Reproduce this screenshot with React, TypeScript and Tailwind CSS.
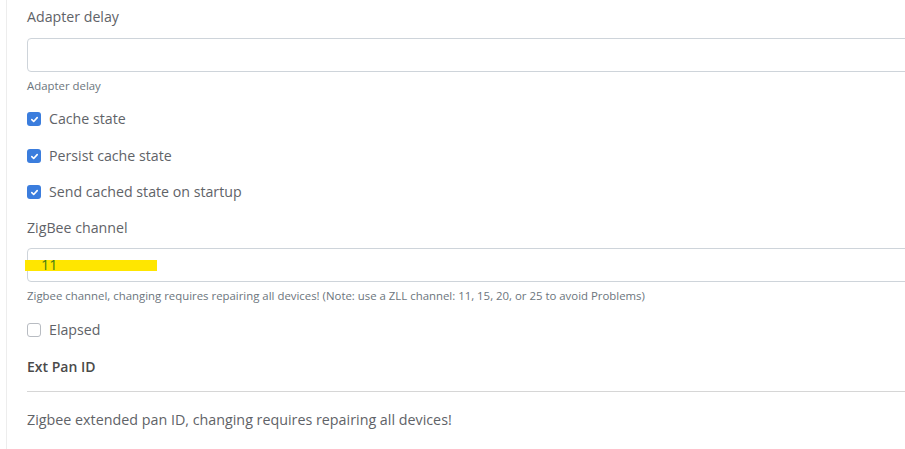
import React from "react";

function Check({ checked, label, className }: { checked: boolean; label: string; className?: string }) {
  return (
    <div className={"flex items-center h-[22px] " + (className ?? "")}>
      {checked ? (
        <span className="w-[14px] h-[14px] rounded-[3px] bg-[#3b7ddd] flex items-center justify-center">
          <svg width="9" height="9" viewBox="0 0 10 10">
            <path d="M2 5.2 L4.1 7.2 L8 2.9" fill="none" stroke="#fff" strokeWidth="1.8" strokeLinecap="round" strokeLinejoin="round" />
          </svg>
        </span>
      ) : (
        <span className="w-[14px] h-[14px] rounded-[3px] border border-[#b8bcc2] bg-white" />
      )}
      <span className="ml-[8px] text-[14.2px] text-[#5f6368]">{label}</span>
    </div>
  );
}

export default function App() {
  return (
    <div
      className="w-[905px] h-[449px] bg-white overflow-hidden pl-[6px]"
      style={{ fontFamily: '"Open Sans", "Noto Sans", sans-serif' }}
    >
      <div className="h-full border-l border-[#ededed] pl-[20px] pt-[6px] flex flex-col">
        <div className="h-[22px] leading-[22px] text-[14.2px] text-[#5f6368]">Adapter delay</div>
        <div className="mt-[10px] h-[34px] w-[900px] shrink-0 border border-[#ced4da] rounded-[4px] bg-white" />
        <div className="mt-[6px] h-[16px] leading-[16px] text-[11.4px] text-[#6c757d]">Adapter delay</div>

        <Check checked label="Cache state" className="mt-[14px]" />
        <Check checked label="Persist cache state" className="mt-[15px]" />
        <Check checked label="Send cached state on startup" className="mt-[14px]" />

        <div className="mt-[14px] h-[22px] leading-[22px] text-[14.2px] text-[#5f6368]">ZigBee channel</div>
        <div className="relative mt-[9px] h-[34px] w-[900px] shrink-0 border border-[#ced4da] rounded-[4px] bg-white">
          <div className="absolute left-[-3px] top-[11px] w-[132px] h-[11px] bg-[#ffe600]" />
          <div className="absolute left-[13px] top-[5px] h-[22px] leading-[22px] text-[14.5px] text-[#3f7d14]">11</div>
        </div>
        <div className="mt-[6px] h-[16px] leading-[16px] text-[11.4px] text-[#6c757d]">
          Zigbee channel, changing requires repairing all devices! (Note: use a ZLL channel: 11, 15, 20, or 25 to avoid Problems)
        </div>

        <Check checked={false} label="Elapsed" className="mt-[15px]" />

        <div className="mt-[15px] h-[22px] leading-[22px] text-[14px] font-semibold text-[#4a4a4a]">Ext Pan ID</div>
        <div className="mt-[13px] h-px w-[900px] shrink-0 bg-[#d6d6d6]" />
        <div className="mt-[17px] h-[22px] leading-[22px] text-[14.3px] text-[#5f6368]">
          Zigbee extended pan ID, changing requires repairing all devices!
        </div>
      </div>
    </div>
  );
}
